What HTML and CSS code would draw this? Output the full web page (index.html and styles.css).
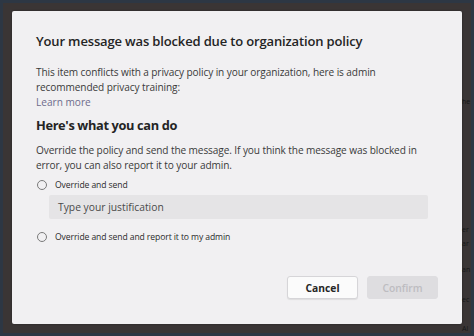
FILE: index.html
```html
<!DOCTYPE html>
<html>
<head>
<meta charset="utf-8">
<link rel="stylesheet" href="styles.css">
</head>
<body>
<div class="backdrop">
  <div class="side-text">
    <span class="s1">he</span>
    <span class="s2">er</span>
    <span class="s3">ar</span>
    <span class="s4">an</span>
    <span class="s5">ec</span>
    <span class="s6">Al</span>
  </div>
  <div class="dialog">
    <h1 class="title">Your message was blocked due to organization policy</h1>
    <p class="text first">This item conflicts with a privacy policy in your organization, here is admin recommended privacy training:</p>
    <a class="link">Learn more</a>
    <h2 class="subtitle">Here's what you can do</h2>
    <p class="text second">Override the policy and send the message. If you think the message was blocked in error, you can also report it to your admin.</p>
    <label class="radio"><span class="circle"></span><span>Override and send</span></label>
    <div class="input">Type your justification</div>
    <label class="radio radio2"><span class="circle"></span><span>Override and send and report it to my admin</span></label>
    <div class="actions">
      <button class="btn cancel">Cancel</button>
      <button class="btn confirm">Confirm</button>
    </div>
  </div>
</div>
</body>
</html>
```

FILE: styles.css
```css
html, body {
  margin: 0;
  padding: 0;
}
body {
  width: 474px;
  height: 336px;
  background: #2d3744;
  font-family: "Open Sans", "Noto Sans", sans-serif;
  color: #242424;
  overflow: hidden;
}
.backdrop {
  position: relative;
  margin: 3px;
  width: 468px;
  height: 330px;
  background: #3a3535;
  box-sizing: border-box;
  padding: 8px 0 0 9px;
}
.side-text {
  position: absolute;
  right: 0;
  top: 0;
  width: 9px;
  height: 100%;
  font-size: 7px;
  color: #151515;
}
.side-text span { position: absolute; left: 0; }
.s1 { top: 94px; }
.s2 { top: 222px; }
.s3 { top: 236px; }
.s4 { top: 262px; }
.s5 { top: 292px; }
.s6 { top: 321px; }
.dialog {
  width: 450px;
  height: 313px;
  box-sizing: border-box;
  background: #f1f0f2;
  border-radius: 2px;
  padding: 21px 24px 0 24px;
  display: flex;
  flex-direction: column;
  box-shadow: 0 0 2px rgba(0,0,0,0.4);
}
.title {
  margin: 0;
  font-size: 13px;
  font-weight: 600;
  line-height: 18px;
  letter-spacing: -0.15px;
}
.text {
  margin: 0;
  font-size: 10.1px;
  line-height: 15px;
  color: #3a3a3a;
  letter-spacing: -0.1px;
}
.first { margin-top: 15px; }
.link {
  font-size: 10.1px;
  line-height: 14px;
  color: #6e6c8c;
}
.subtitle {
  margin: 7px 0 0 0;
  font-size: 12.8px;
  font-weight: 700;
  line-height: 18px;
  letter-spacing: -0.35px;
}
.second { margin-top: 9px; }
.radio {
  display: flex;
  align-items: center;
  gap: 8px;
  margin-top: 5px;
  font-size: 8.6px;
  line-height: 14px;
  color: #2a2a2a;
  letter-spacing: -0.1px;
}
.circle {
  width: 8px;
  height: 8px;
  border: 1px solid #7a7a7a;
  border-radius: 50%;
  margin-left: 1px;
  flex: none;
}
.input {
  margin: 3px 10px 0 13px;
  height: 24px;
  background: #e5e4e6;
  border-radius: 2px;
  font-size: 10.3px;
  line-height: 24px;
  padding-left: 9px;
  color: #4a4a4a;
}
.radio2 { margin-top: 11px; }
.actions {
  margin-top: auto;
  margin-bottom: 25px;
  display: flex;
  justify-content: flex-end;
  gap: 9px;
}
.btn {
  width: 71px;
  height: 23px;
  border-radius: 3px;
  font-family: "Open Sans", "Noto Sans", sans-serif;
  font-size: 10.3px;
  font-weight: 700;
  padding: 0;
}
.cancel {
  background: #fbfbfb;
  border: 1px solid #d6d5d8;
  color: #262626;
  box-shadow: 0 1px 1px rgba(0,0,0,0.08);
}
.confirm {
  background: #dedde0;
  border: 1px solid #dedde0;
  color: #bdbcc0;
  font-weight: 600;
}
```
